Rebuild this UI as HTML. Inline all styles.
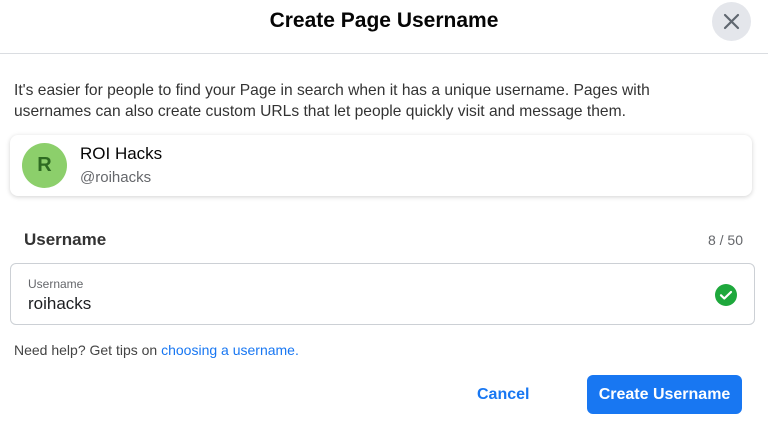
<!DOCTYPE html>
<html><head><style>
*{margin:0;padding:0;box-sizing:border-box}
body{width:768px;height:424px;background:#fff;font-family:"Liberation Sans",Arial,sans-serif;position:relative;overflow:hidden;color:#1c1e21}
.a{position:absolute;white-space:nowrap}
</style></head><body>
<div class="a" style="left:0;width:768px;top:9px;text-align:center;font-size:21px;font-weight:bold;color:#050505">Create Page Username</div>
<div class="a" style="left:712px;top:2px;width:39px;height:39px;border-radius:50%;background:#e4e6eb"></div>
<svg class="a" style="left:712px;top:2px" width="39" height="39"><path d="M13 13L26 26M26 13L13 26" stroke="#606770" stroke-width="2.2" stroke-linecap="round"/></svg>
<div class="a" style="left:0;top:53px;width:768px;height:1px;background:#dadde1"></div>
<div class="a" style="left:14px;top:80px;font-size:15.6px;line-height:21px;color:#333">It's easier for people to find your Page in search when it has a unique username. Pages with<br>usernames can also create custom URLs that let people quickly visit and message them.</div>
<div class="a" style="left:10px;top:135px;width:742px;height:61px;border-radius:8px;background:#fff;box-shadow:0 1px 5px rgba(0,0,0,.18)"></div>
<div class="a" style="left:22px;top:143px;width:45px;height:45px;border-radius:50%;background:#8ccf6b;color:#2e6b22;font-weight:bold;font-size:20px;text-align:center;line-height:45px">R</div>
<div class="a" style="left:80px;top:144px;font-size:17px;color:#050505">ROI Hacks</div>
<div class="a" style="left:80px;top:169px;font-size:15px;color:#65676b">@roihacks</div>
<div class="a" style="left:24px;top:230px;font-size:17px;font-weight:bold;color:#333">Username</div>
<div class="a" style="right:25px;top:232px;font-size:14px;color:#65676b">8 / 50</div>
<div class="a" style="left:10px;top:263px;width:745px;height:62px;border:1px solid #ccd0d5;border-radius:6px"></div>
<div class="a" style="left:28px;top:277px;font-size:12px;color:#65676b">Username</div>
<div class="a" style="left:28px;top:294px;font-size:17px;color:#1c1e21">roihacks</div>
<svg class="a" style="left:714px;top:283px" width="24" height="24"><circle cx="12" cy="12" r="11" fill="#1ea83c"/><path d="M7 12.3l3.3 3.2L17 9" stroke="#fff" stroke-width="2.2" fill="none" stroke-linecap="round" stroke-linejoin="round"/></svg>
<div class="a" style="left:14px;top:342px;font-size:14px;color:#444">Need help? Get tips on <span style="color:#1877f2">choosing a username.</span></div>
<div class="a" style="left:477px;top:386px;font-size:16px;font-weight:bold;color:#1877f2">Cancel</div>
<div class="a" style="left:587px;top:375px;width:155px;height:39px;border-radius:6px;background:#1877f2;color:#fff;font-size:16px;font-weight:bold;text-align:center;line-height:40px">Create Username</div>
</body></html>
